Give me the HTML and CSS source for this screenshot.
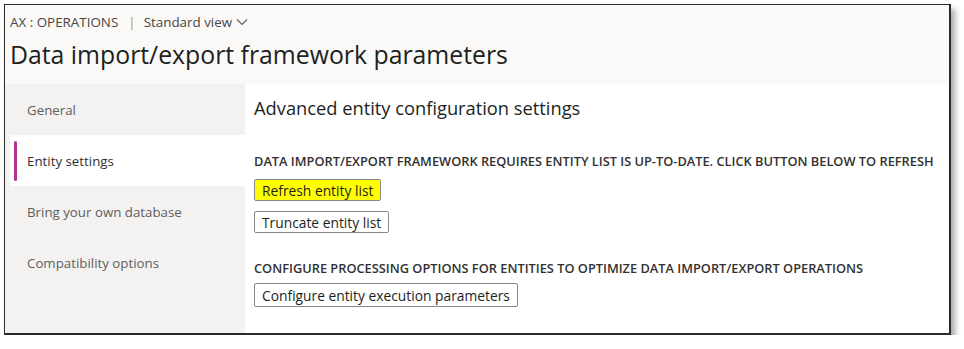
FILE: index.html
```html
<!DOCTYPE html>
<html>
<head>
<meta charset="utf-8">
<link rel="stylesheet" href="styles.css">
</head>
<body>
<div class="frame">
  <header class="header">
    <div class="crumbs">
      <span class="company">AX : OPERATIONS</span>
      <span class="sep">|</span>
      <span class="view">Standard view</span>
      <svg class="chev" width="12" height="8" viewBox="0 0 12 8"><path d="M1 1.5 L6 6.5 L11 1.5" fill="none" stroke="#605e5c" stroke-width="1.1"/></svg>
    </div>
    <h1 class="title">Data import/export framework parameters</h1>
  </header>
  <div class="body">
    <nav class="nav">
      <div class="nav-item">General</div>
      <div class="nav-item active">Entity settings</div>
      <div class="nav-item">Bring your own database</div>
      <div class="nav-item">Compatibility options</div>
    </nav>
    <main class="content">
      <h2 class="section-title">Advanced entity configuration settings</h2>
      <div class="group group-refresh">
        <div class="group-label">DATA IMPORT/EXPORT FRAMEWORK REQUIRES ENTITY LIST IS UP-TO-DATE. CLICK BUTTON BELOW TO REFRESH</div>
        <button class="btn btn-highlight">Refresh entity list</button>
        <button class="btn">Truncate entity list</button>
      </div>
      <div class="group group-config">
        <div class="group-label">CONFIGURE PROCESSING OPTIONS FOR ENTITIES TO OPTIMIZE DATA IMPORT/EXPORT OPERATIONS</div>
        <button class="btn">Configure entity execution parameters</button>
      </div>
    </main>
  </div>
</div>
</body>
</html>
```
FILE: styles.css
```css
html, body {
  margin: 0;
  padding: 0;
  background: #ffffff;
}
body {
  font-family: "Segoe UI", "Open Sans", "Liberation Sans", sans-serif;
  color: #323130;
}
.frame {
  margin: 4px 0 0 4px;
  width: 944px;
  height: 328px;
  border: 1px solid #2b2b2b;
  border-right-width: 2px;
  border-bottom-width: 2px;
  box-shadow: 4px 5px 6px rgba(0,0,0,0.35);
  display: flex;
  flex-direction: column;
  overflow: hidden;
  background: #faf9f8;
}
.header {
  height: 79px;
  padding-left: 5px;
  box-sizing: border-box;
}
.crumbs {
  display: flex;
  align-items: center;
  height: 16px;
  margin-top: 9px;
  font-size: 13.4px;
  color: #484644;
}
.sep {
  color: #c19c00;
  margin: 0 8px 0 10px;
}
.chev {
  margin-left: 4px;
}
.title {
  margin: 8px 0 0 0;
  font-size: 24.8px;
  font-weight: 400;
  color: #201f1e;
  line-height: 33px;
}
.body {
  flex: 1;
  display: flex;
}
.nav {
  width: 240px;
  background: #f3f2f1;
  padding-left: 5px;
  box-sizing: border-box;
}
.nav-item {
  height: 51px;
  display: flex;
  align-items: center;
  padding-left: 17px;
  font-size: 13.3px;
  color: #605e5c;
  position: relative;
}
.nav-item.active {
  background: #ffffff;
  color: #323130;
}
.nav-item.active::before {
  content: "";
  position: absolute;
  left: 4px;
  top: 6px;
  bottom: 5px;
  width: 3px;
  border-radius: 2px;
  background: #b5318f;
}
.content {
  flex: 1;
  background: #ffffff;
  padding: 12px 0 0 9px;
}
.section-title {
  margin: 0;
  font-size: 18.3px;
  font-weight: 400;
  line-height: 24px;
  color: #201f1e;
}
.group {
  display: flex;
  flex-direction: column;
  align-items: flex-start;
  gap: 10px;
}
.group-refresh {
  margin-top: 33px;
}
.group-config {
  margin-top: 27px;
}
.group-config .group-label {
  margin-bottom: -3px;
}
.group-label {
  font-size: 12.8px;
  font-weight: 600;
  line-height: 16px;
  color: #323130;
}
.btn {
  font-family: inherit;
  font-size: 13.8px;
  color: #201f1e;
  background: #ffffff;
  border: 1px solid #8a8886;
  border-radius: 2px;
  height: 22px;
  padding: 0 7px;
  line-height: 19px;
}
.group-config .btn {
  height: 24px;
}
.btn-highlight {
  background: #ffff00;
}
```
